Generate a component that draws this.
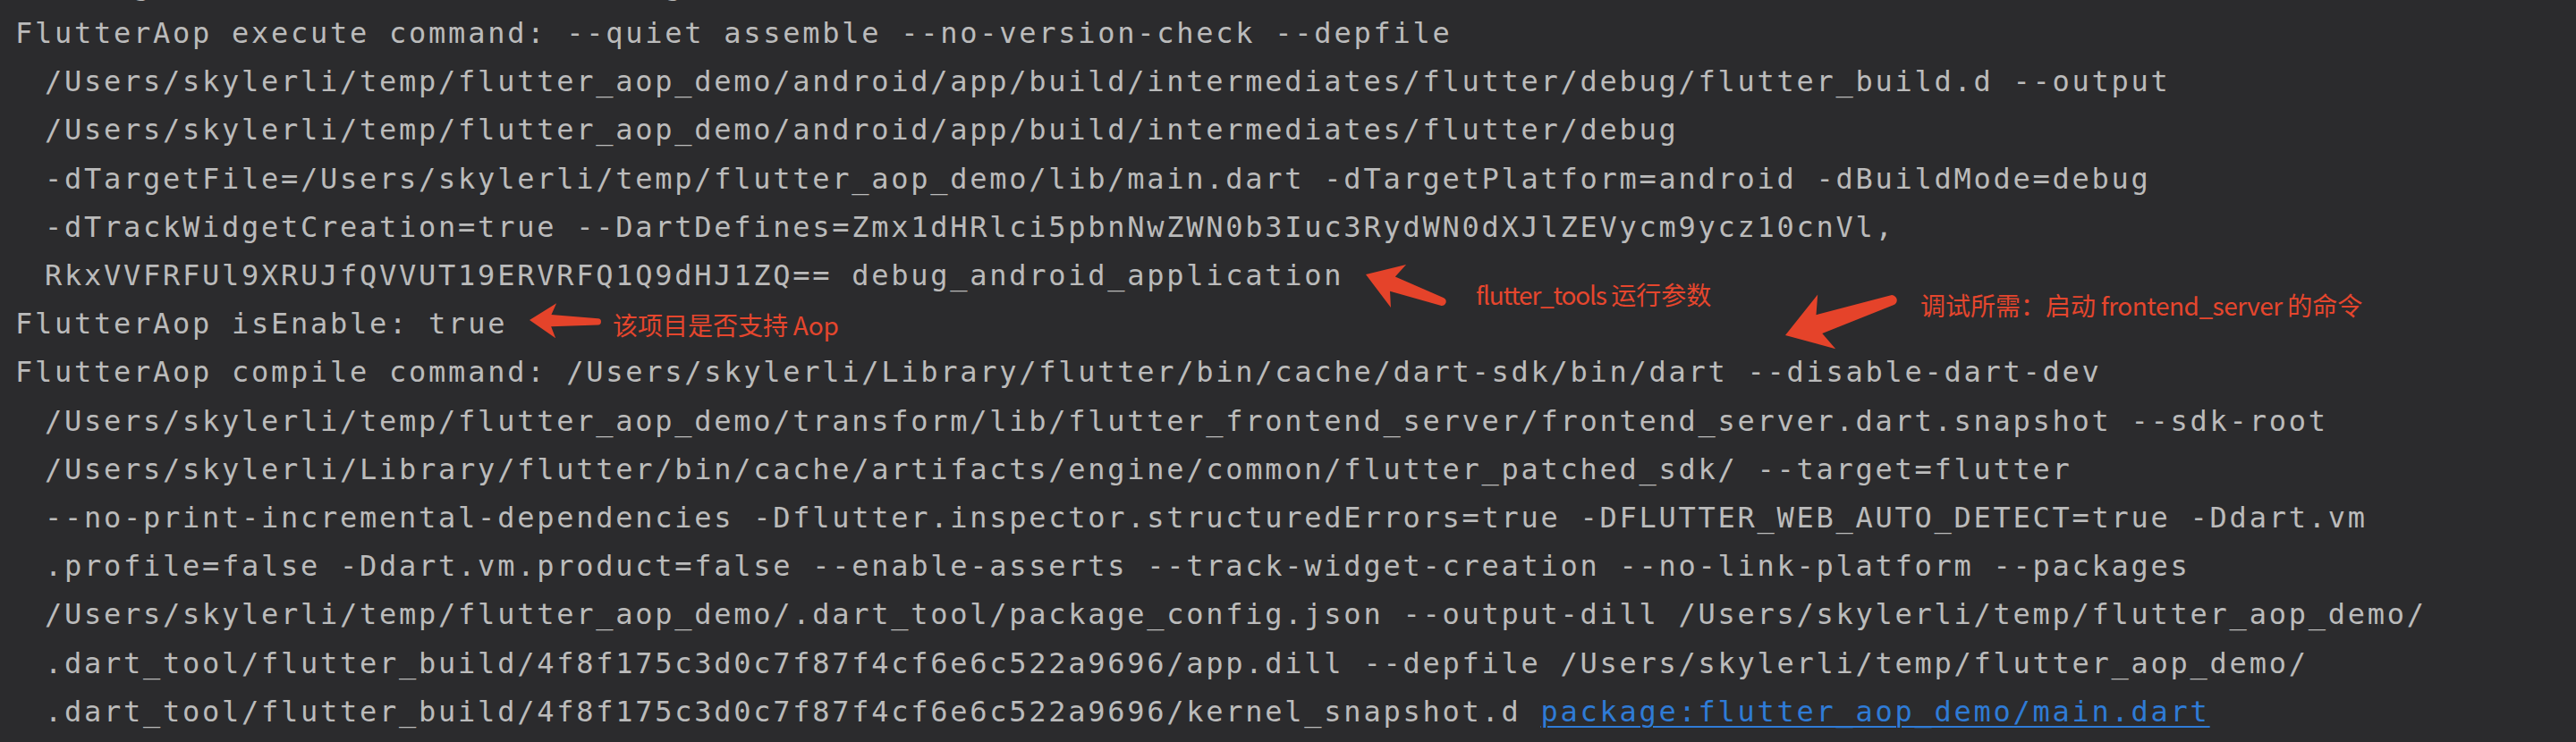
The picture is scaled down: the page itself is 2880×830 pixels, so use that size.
import React from "react";

const mono = { fontFamily: '"DejaVu Sans Mono", "Liberation Mono", monospace' };
const cjk = { fontFamily: '"Noto Sans CJK SC", "Noto Sans", sans-serif' };

interface LogLine {
  text: string;
  wrap?: boolean;
  link?: string;
}

const lines: LogLine[] = [
  { text: "FlutterAop execute command: --quiet assemble --no-version-check --depfile" },
  { text: "/Users/skylerli/temp/flutter_aop_demo/android/app/build/intermediates/flutter/debug/flutter_build.d --output", wrap: true },
  { text: "/Users/skylerli/temp/flutter_aop_demo/android/app/build/intermediates/flutter/debug", wrap: true },
  { text: "-dTargetFile=/Users/skylerli/temp/flutter_aop_demo/lib/main.dart -dTargetPlatform=android -dBuildMode=debug", wrap: true },
  { text: "-dTrackWidgetCreation=true --DartDefines=Zmx1dHRlci5pbnNwZWN0b3Iuc3RydWN0dXJlZEVycm9ycz10cnVl,", wrap: true },
  { text: "RkxVVFRFUl9XRUJfQVVUT19ERVRFQ1Q9dHJ1ZQ== debug_android_application", wrap: true },
  { text: "FlutterAop isEnable: true" },
  { text: "FlutterAop compile command: /Users/skylerli/Library/flutter/bin/cache/dart-sdk/bin/dart --disable-dart-dev" },
  { text: "/Users/skylerli/temp/flutter_aop_demo/transform/lib/flutter_frontend_server/frontend_server.dart.snapshot --sdk-root", wrap: true },
  { text: "/Users/skylerli/Library/flutter/bin/cache/artifacts/engine/common/flutter_patched_sdk/ --target=flutter", wrap: true },
  { text: "--no-print-incremental-dependencies -Dflutter.inspector.structuredErrors=true -DFLUTTER_WEB_AUTO_DETECT=true -Ddart.vm", wrap: true },
  { text: ".profile=false -Ddart.vm.product=false --enable-asserts --track-widget-creation --no-link-platform --packages", wrap: true },
  { text: "/Users/skylerli/temp/flutter_aop_demo/.dart_tool/package_config.json --output-dill /Users/skylerli/temp/flutter_aop_demo/", wrap: true },
  { text: ".dart_tool/flutter_build/4f8f175c3d0c7f87f4cf6e6c522a9696/app.dill --depfile /Users/skylerli/temp/flutter_aop_demo/", wrap: true },
  {
    text: ".dart_tool/flutter_build/4f8f175c3d0c7f87f4cf6e6c522a9696/kernel_snapshot.d ",
    wrap: true,
    link: "package:flutter_aop_demo/main.dart",
  },
];

// thick "Preview" style arrow, tip at (0,0), tail along +x
const arrowPath = (len: number, w: number) => {
  const h = w * 0.76;
  const neck = w * 0.17;
  const t = w * 0.09;
  return `M0 0 L${h} ${-w / 2} L${h * 0.82} ${-neck} L${len - t} ${-t} A${t} ${t} 0 0 1 ${len - t} ${t} L${h * 0.82} ${neck} L${h} ${w / 2} Z`;
};

const arrows = [
  { x: 1527, y: 307, len: 95, angle: 19.6, w: 51 },
  { x: 592, y: 358, len: 80, angle: 1.4, w: 39 },
  { x: 1996, y: 375, len: 131, angle: -18.2, w: 64 },
];

export default function App() {
  return (
    <div className="relative w-[2880px] h-[830px] overflow-hidden bg-[#2b2b2d]">
      <div
        className="pt-[10px] pl-[17px] text-[32px] leading-[54.2px] tracking-[2.74px] text-[#bbbbbb] whitespace-pre"
        style={mono}
      >
        {/* previous line, scrolled off: only its descenders peek in */}
        <div className="-mt-[54.2px]">{"      g                          g"}</div>
        {lines.map((l, i) => (
          <div key={i} className={l.wrap ? "pl-[33px]" : ""}>
            {l.text}
            {l.link && <span className="text-[#2f7bd6] underline decoration-2 underline-offset-[5px]">{l.link}</span>}
          </div>
        ))}
      </div>

      {/* annotations */}
      <svg className="absolute left-0 top-0" width={2880} height={830}>
        {arrows.map((a, i) => (
          <path
            key={i}
            d={arrowPath(a.len, a.w)}
            fill="#e5432a"
            transform={`translate(${a.x} ${a.y}) rotate(${a.angle})`}
          />
        ))}
      </svg>
      <div className="absolute left-[1650px] top-[315px] text-[28px] leading-none text-[#e5462d] whitespace-pre" style={cjk}>
        <span className="tracking-[-1.2px]">flutter_tools</span>{"\u2009"}运行参数
      </div>
      <div className="absolute left-[685px] top-[349px] text-[28px] leading-none text-[#e5462d] whitespace-pre" style={cjk}>
        该项目是否支持{"\u2009"}Aop
      </div>
      <div className="absolute left-[2147px] top-[327px] text-[28px] leading-none text-[#e5462d] whitespace-pre" style={cjk}>
        调试所需：启动{"\u2009"}<span className="tracking-[-0.5px]">frontend_server</span>{"\u2009"}的命令
      </div>
    </div>
  );
}
